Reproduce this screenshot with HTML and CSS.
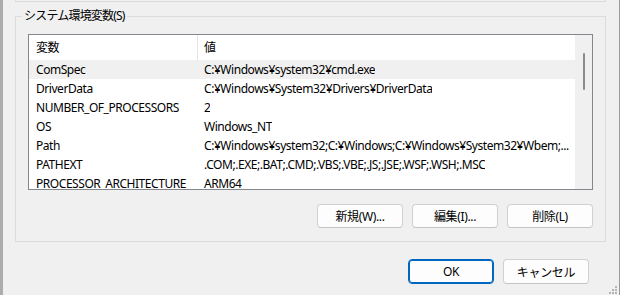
FILE: index.html
```html
<!DOCTYPE html>
<html lang="ja">
<head>
    <meta charset="UTF-8">
    <title>環境変数</title>
    <link rel="stylesheet" href="styles.css">
</head>
<body>
    <div class="dialog">
        <div class="prev-group"></div>

        <fieldset class="group">
            <legend>システム環境変数(S)</legend>

            <div class="list">
                <div class="list-body">
                    <div class="row header">
                        <div class="cell name">変数</div>
                        <div class="cell value">値</div>
                    </div>
                    <div class="row selected">
                        <div class="cell name">ComSpec</div>
                        <div class="cell value">C:¥Windows¥system32¥cmd.exe</div>
                    </div>
                    <div class="row">
                        <div class="cell name">DriverData</div>
                        <div class="cell value">C:¥Windows¥System32¥Drivers¥DriverData</div>
                    </div>
                    <div class="row">
                        <div class="cell name">NUMBER_OF_PROCESSORS</div>
                        <div class="cell value">2</div>
                    </div>
                    <div class="row">
                        <div class="cell name">OS</div>
                        <div class="cell value">Windows_NT</div>
                    </div>
                    <div class="row">
                        <div class="cell name">Path</div>
                        <div class="cell value">C:¥Windows¥system32;C:¥Windows;C:¥Windows¥System32¥Wbem;...</div>
                    </div>
                    <div class="row">
                        <div class="cell name">PATHEXT</div>
                        <div class="cell value">.COM;.EXE;.BAT;.CMD;.VBS;.VBE;.JS;.JSE;.WSF;.WSH;.MSC</div>
                    </div>
                    <div class="row">
                        <div class="cell name">PROCESSOR_ARCHITECTURE</div>
                        <div class="cell value">ARM64</div>
                    </div>
                </div>
                <div class="scrollbar">
                    <div class="thumb"></div>
                </div>
            </div>

            <div class="button-row">
                <button>新規(W)...</button>
                <button>編集(I)...</button>
                <button>削除(L)</button>
            </div>
        </fieldset>

        <div class="dialog-buttons">
            <button class="default">OK</button>
            <button>キャンセル</button>
        </div>

        <svg class="grip" width="10" height="10" viewBox="0 0 10 10">
            <rect x="7" y="1" width="2" height="2" fill="#b5b5b5"/>
            <rect x="4" y="4" width="2" height="2" fill="#b5b5b5"/>
            <rect x="7" y="4" width="2" height="2" fill="#b5b5b5"/>
            <rect x="1" y="7" width="2" height="2" fill="#b5b5b5"/>
            <rect x="4" y="7" width="2" height="2" fill="#b5b5b5"/>
            <rect x="7" y="7" width="2" height="2" fill="#b5b5b5"/>
        </svg>
    </div>
</body>
</html>
```

FILE: styles.css
```css
* {
    box-sizing: border-box;
}
body {
    margin: 0;
    background: #f0f0f0;
    font-family: "Noto Sans", "Noto Sans CJK JP", sans-serif;
    font-size: 12px;
    letter-spacing: -0.35px;
    color: #000;
}
.dialog {
    position: relative;
    width: 620px;
    height: 295px;
    overflow: hidden;
    border-left: 3px solid #acacac;
    border-right: 1px solid #9a9a9a;
}
.prev-group {
    height: 2px;
    margin: 0 13px 0 12px;
    border: 1px solid #dcdcdc;
    border-top: none;
}
.group {
    margin: 6px 13px 0 12px;
    padding: 0 12px 13px 12px;
    border: 1px solid #dcdcdc;
    min-width: 0;
}
.group legend {
    margin-left: -6px;
    padding: 0 2px;
    line-height: 16px;
    letter-spacing: -0.8px;
    color: #000;
}
.list {
    margin-top: 10px;
    height: 156px;
    border: 1px solid #828790;
    background: #fff;
    display: flex;
    overflow: hidden;
}
.list-body {
    flex: 1;
    min-width: 0;
    overflow: hidden;
    letter-spacing: -0.45px;
}
.row {
    display: flex;
    height: 19px;
    align-items: center;
    white-space: nowrap;
}
.row.header {
    height: 25px;
}
.row.selected {
    background: #f0f0f0;
}
.cell {
    line-height: 19px;
}
.cell.name {
    width: 169px;
    flex-shrink: 0;
    padding-left: 7px;
}
.cell.value {
    padding-left: 6px;
    overflow: hidden;
}
.header .cell {
    line-height: 25px;
}
.header .cell.name {
    border-right: 1px solid #e5e5e5;
}
.scrollbar {
    width: 17px;
    background: #f0f0f0;
    padding-top: 18px;
    display: flex;
    justify-content: center;
}
.thumb {
    width: 2px;
    height: 37px;
    background: #8a8a8a;
    border-radius: 1px;
}
button {
    width: 86px;
    height: 24px;
    font-family: inherit;
    font-size: 12px;
    letter-spacing: inherit;
    color: #000;
    background: #fdfdfd;
    border: 1px solid #d0d0d0;
    border-bottom-color: #c4c4c4;
    border-radius: 4px;
    padding: 0;
}
.button-row {
    display: flex;
    justify-content: flex-end;
    gap: 9px;
    margin-top: 14px;
}
.dialog-buttons {
    display: flex;
    justify-content: flex-end;
    gap: 9px;
    margin: 17px 30px 0 0;
}
.dialog-buttons button {
    height: 25px;
}
button.default {
    border: 1px solid #0067c0;
    box-shadow: inset 0 0 0 1px #0067c0;
}
.grip {
    position: absolute;
    right: 1px;
    bottom: 0;
}
```
